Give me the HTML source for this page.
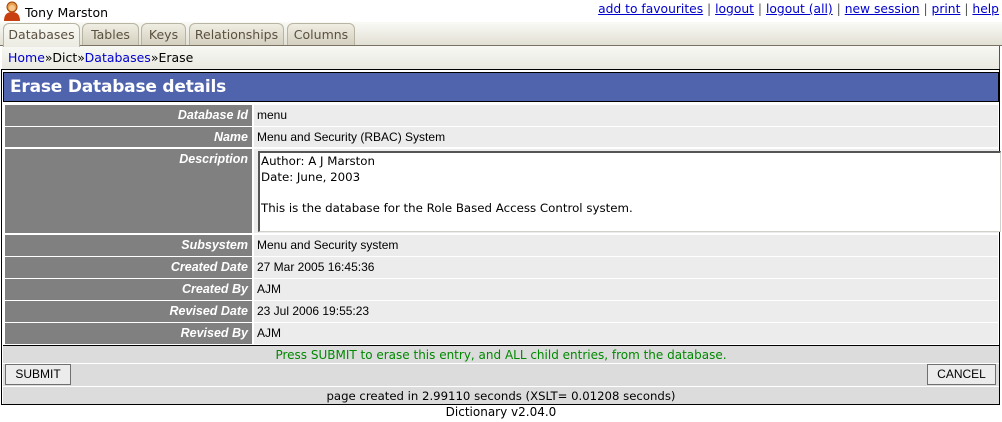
<!DOCTYPE html>
<html><head><meta charset="utf-8"><style>
*{margin:0;padding:0;box-sizing:border-box}
body{width:1002px;height:422px;background:#fff;position:relative;overflow:hidden;font-family:"DejaVu Sans","Liberation Sans",sans-serif;font-size:12px;color:#000}
.a{position:absolute}
a{color:#00c;text-decoration:underline}
.tab{position:absolute;top:23px;height:22px;border:1px solid #b8b4a2;border-bottom:none;border-radius:6px 6px 0 0;background:linear-gradient(#f0ede2,#d4d0c0);color:#5a5040;font-size:12.5px;text-align:center;line-height:22px}
.lbl{position:absolute;left:5px;width:247px;background:#808080;color:#fff;font-family:"Liberation Sans",sans-serif;font-weight:bold;font-style:italic;font-size:12.5px;text-align:right;padding-right:4px}
.val{position:absolute;left:254px;width:744px;background:#ececec;font-family:"Liberation Sans",sans-serif;font-size:12px;padding-left:3px}
.btn{position:absolute;height:21px;background:#ececec;border:1px solid #707070;font-family:"Liberation Sans",sans-serif;font-size:12px;text-align:center;line-height:19px}
</style></head><body>
<svg class="a" style="left:3px;top:1px" width="18" height="20" viewBox="0 0 18 20"><circle cx="9" cy="6" r="5" fill="#e8a050" stroke="#a04000"/><path d="M1 20 Q1 11 9 11 Q17 11 17 20Z" fill="#c84010"/><circle cx="9" cy="7" r="3" fill="#f6c890"/></svg>
<div class="a" style="left:25px;top:5px;font-size:12.5px">Tony Marston</div>
<div class="a" style="right:3px;top:2px;font-size:12.3px;color:#555"><a>add to favourites</a> | <a>logout</a> | <a>logout (all)</a> | <a>new session</a> | <a>print</a> | <a>help</a></div>
<div class="a" style="left:0;top:22px;width:1002px;height:24px;background:linear-gradient(#fafaf6,#e2e0d4);border-bottom:1px solid #7a7264"></div>
<div class="tab" style="left:3px;width:77px;background:linear-gradient(#fafaf4,#ecebe2);height:24px;z-index:2">Databases</div>
<div class="tab" style="left:82px;width:57px">Tables</div>
<div class="tab" style="left:141px;width:45px">Keys</div>
<div class="tab" style="left:189px;width:95px">Relationships</div>
<div class="tab" style="left:287px;width:68px">Columns</div>
<div class="a" style="left:2px;top:46px;width:998px;height:24px;background:linear-gradient(#f8f8f4,#e8e8e0);border-right:1px solid #555"></div>
<div class="a" style="left:8px;top:50px;font-size:12.5px"><a style="text-decoration:none">Home</a>»Dict»<a style="text-decoration:none">Databases</a>»Erase</div>
<div class="a" style="left:1px;top:69px;width:999px;height:336px;border:1px solid #000;background:#fff"></div>
<div class="a" style="left:3px;top:72px;width:996px;height:30px;background:#4f64ad;border:1px solid #000;color:#fff;font-weight:bold;font-size:17px;line-height:29px;padding-left:6px;letter-spacing:-0.2px">Erase Database details</div>
<div class="lbl" style="top:105px;height:21px;line-height:21px">Database Id</div><div class="val" style="top:105px;height:21px;line-height:21px">menu</div>
<div class="lbl" style="top:127px;height:20px;line-height:20px">Name</div><div class="val" style="top:127px;height:20px;line-height:20px">Menu and Security (RBAC) System</div>
<div class="lbl" style="top:149px;height:84px;line-height:20px">Description</div><div class="val" style="top:149px;height:84px"></div>
<div class="a" style="left:258px;top:151px;width:743px;height:81px;background:#fff;border:1px solid #d0d0c8;border-top:2px solid #555;border-left:2px solid #555;font-size:11.8px;line-height:15.5px;padding:1px 0 0 1px;white-space:pre">Author: A J Marston
Date: June, 2003

This is the database for the Role Based Access Control system.</div>
<div class="lbl" style="top:235px;height:21px;line-height:21px">Subsystem</div><div class="val" style="top:235px;height:21px;line-height:21px">Menu and Security system</div>
<div class="lbl" style="top:257px;height:21px;line-height:21px">Created Date</div><div class="val" style="top:257px;height:21px;line-height:21px">27 Mar 2005 16:45:36</div>
<div class="lbl" style="top:279px;height:21px;line-height:21px">Created By</div><div class="val" style="top:279px;height:21px;line-height:21px">AJM</div>
<div class="lbl" style="top:301px;height:21px;line-height:21px">Revised Date</div><div class="val" style="top:301px;height:21px;line-height:21px">23 Jul 2006 19:55:23</div>
<div class="lbl" style="top:323px;height:21px;line-height:21px">Revised By</div><div class="val" style="top:323px;height:21px;line-height:21px">AJM</div>
<div class="a" style="left:3px;top:345px;width:996px;height:59px;background:#dcdcdc;border-top:1px solid #000"></div>
<div class="a" style="left:3px;top:346px;width:996px;height:18px;border-bottom:1px solid #fff;color:#080;text-align:center;line-height:18px">Press SUBMIT to erase this entry, and ALL child entries, from the database.</div>
<div class="btn" style="left:5px;top:364px;width:66px">SUBMIT</div>
<div class="btn" style="left:927px;top:364px;width:69px">CANCEL</div>
<div class="a" style="left:3px;top:386px;width:996px;height:18px;border-top:1px solid #fff;text-align:center;line-height:18px;font-size:11.7px">page created in 2.99110 seconds (XSLT= 0.01208 seconds)</div>
<div class="a" style="left:0;top:404px;width:1002px;text-align:center;line-height:16px">Dictionary v2.04.0</div>
</body></html>
